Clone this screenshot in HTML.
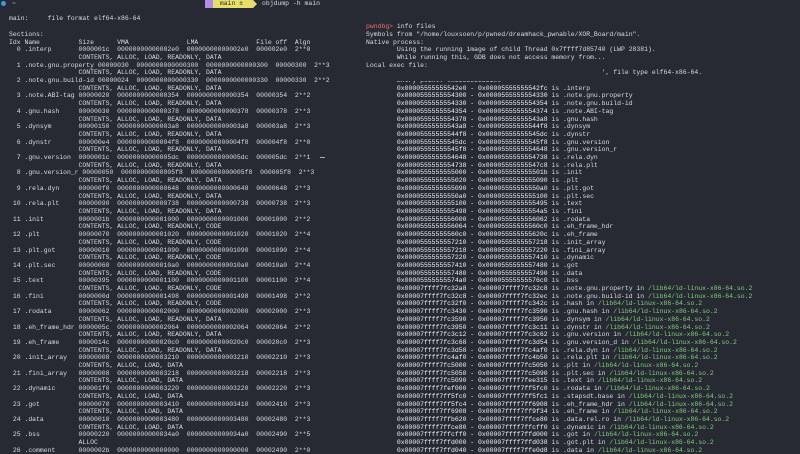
<!DOCTYPE html>
<html><head><meta charset="utf-8"><style>
html,body{margin:0;padding:0;background:#272a33;width:800px;height:449px;overflow:hidden}
pre{position:absolute;margin:0;font-family:"Liberation Mono",monospace;font-size:6.45px;line-height:7.7px;color:#d6dbe4;white-space:pre}
.r{color:#ef6b73}.g{color:#7fd07a}.w{color:#eef1f6}
</style></head><body>
<div style="position:absolute;left:1px;top:1px;width:5px;height:5px;border-radius:50%;background:#3a9fd8"></div>
<div style="position:absolute;left:205px;top:0;width:8px;height:8px;background:#b48ae8"></div>
<div style="position:absolute;left:213px;top:0;width:40px;height:8px;background:#e6df6b"></div>
<div style="position:absolute;left:253px;top:0;width:0;height:0;border-top:4px solid transparent;border-bottom:4px solid transparent;border-left:4px solid #e6df6b"></div>
<pre style="left:12px;top:0">~</pre>
<pre style="left:216px;top:0;color:#2a2a2a"> main ±</pre>
<pre style="left:262px;top:0">objdump -h main</pre>
<pre style="left:9px;top:0">


main:     file format elf64-x86-64

Sections:
Idx Name          Size      VMA               LMA               File off  Algn
  0 .interp       0000001c  00000000000002e0  00000000000002e0  000002e0  2**0
                  CONTENTS, ALLOC, LOAD, READONLY, DATA
  1 .note.gnu.property 00000030  0000000000000300  0000000000000300  00000300  2**3
                  CONTENTS, ALLOC, LOAD, READONLY, DATA
  2 .note.gnu.build-id 00000024  0000000000000330  0000000000000330  00000330  2**2
                  CONTENTS, ALLOC, LOAD, READONLY, DATA
  3 .note.ABI-tag 00000020  0000000000000354  0000000000000354  00000354  2**2
                  CONTENTS, ALLOC, LOAD, READONLY, DATA
  4 .gnu.hash     00000030  0000000000000378  0000000000000378  00000378  2**3
                  CONTENTS, ALLOC, LOAD, READONLY, DATA
  5 .dynsym       00000150  00000000000003a8  00000000000003a8  000003a8  2**3
                  CONTENTS, ALLOC, LOAD, READONLY, DATA
  6 .dynstr       000000e4  00000000000004f8  00000000000004f8  000004f8  2**0
                  CONTENTS, ALLOC, LOAD, READONLY, DATA
  7 .gnu.version  0000001c  00000000000005dc  00000000000005dc  000005dc  2**1
                  CONTENTS, ALLOC, LOAD, READONLY, DATA
  8 .gnu.version_r 00000050  00000000000005f8  00000000000005f8  000005f8  2**3
                  CONTENTS, ALLOC, LOAD, READONLY, DATA
  9 .rela.dyn     000000f0  0000000000000648  0000000000000648  00000648  2**3
                  CONTENTS, ALLOC, LOAD, READONLY, DATA
 10 .rela.plt     00000090  0000000000000738  0000000000000738  00000738  2**3
                  CONTENTS, ALLOC, LOAD, READONLY, DATA
 11 .init         0000001b  0000000000001000  0000000000001000  00001000  2**2
                  CONTENTS, ALLOC, LOAD, READONLY, CODE
 12 .plt          00000070  0000000000001020  0000000000001020  00001020  2**4
                  CONTENTS, ALLOC, LOAD, READONLY, CODE
 13 .plt.got      00000010  0000000000001090  0000000000001090  00001090  2**4
                  CONTENTS, ALLOC, LOAD, READONLY, CODE
 14 .plt.sec      00000060  00000000000010a0  00000000000010a0  000010a0  2**4
                  CONTENTS, ALLOC, LOAD, READONLY, CODE
 15 .text         00000395  0000000000001100  0000000000001100  00001100  2**4
                  CONTENTS, ALLOC, LOAD, READONLY, CODE
 16 .fini         0000000d  0000000000001498  0000000000001498  00001498  2**2
                  CONTENTS, ALLOC, LOAD, READONLY, CODE
 17 .rodata       00000062  0000000000002000  0000000000002000  00002000  2**3
                  CONTENTS, ALLOC, LOAD, READONLY, DATA
 18 .eh_frame_hdr 0000005c  0000000000002064  0000000000002064  00002064  2**2
                  CONTENTS, ALLOC, LOAD, READONLY, DATA
 19 .eh_frame     0000014c  00000000000020c0  00000000000020c0  000020c0  2**3
                  CONTENTS, ALLOC, LOAD, READONLY, DATA
 20 .init_array   00000008  0000000000003210  0000000000003210  00002210  2**3
                  CONTENTS, ALLOC, LOAD, DATA
 21 .fini_array   00000008  0000000000003218  0000000000003218  00002218  2**3
                  CONTENTS, ALLOC, LOAD, DATA
 22 .dynamic      000001f0  0000000000003220  0000000000003220  00002220  2**3
                  CONTENTS, ALLOC, LOAD, DATA
 23 .got          00000070  0000000000003410  0000000000003410  00002410  2**3
                  CONTENTS, ALLOC, LOAD, DATA
 24 .data         00000010  0000000000003480  0000000000003480  00002480  2**3
                  CONTENTS, ALLOC, LOAD, DATA
 25 .bss          00000220  00000000000034a0  00000000000034a0  00002490  2**5
                  ALLOC
 26 .comment      0000002b  0000000000000000  0000000000000000  00002490  2**0</pre>
<pre style="left:366px;top:0">



<span class="r">pwndbg&gt;</span> info files
Symbols from "/home/louxsoen/p/pwned/dreamhack_pwnable/XOR_Board/main".
Native process:
        Using the running image of child Thread 0x7ffff7d85740 (LWP 28381).
        While running this, GDB does not access memory from...
Local exec file:
                                                             ', file type elf64-x86-64.
        Entry point: 0x555555555100
<span class="w">        0x00005555555542e0 - 0x00005555555542fc</span> is .interp
<span class="w">        0x0000555555554300 - 0x0000555555554330</span> is .note.gnu.property
<span class="w">        0x0000555555554330 - 0x0000555555554354</span> is .note.gnu.build-id
<span class="w">        0x0000555555554354 - 0x0000555555554374</span> is .note.ABI-tag
<span class="w">        0x0000555555554378 - 0x00005555555543a8</span> is .gnu.hash
<span class="w">        0x00005555555543a8 - 0x00005555555544f8</span> is .dynsym
<span class="w">        0x00005555555544f8 - 0x00005555555545dc</span> is .dynstr
<span class="w">        0x00005555555545dc - 0x00005555555545f8</span> is .gnu.version
<span class="w">        0x00005555555545f8 - 0x0000555555554648</span> is .gnu.version_r
<span class="w">        0x0000555555554648 - 0x0000555555554738</span> is .rela.dyn
<span class="w">        0x0000555555554738 - 0x00005555555547c8</span> is .rela.plt
<span class="w">        0x0000555555555000 - 0x000055555555501b</span> is .init
<span class="w">        0x0000555555555020 - 0x0000555555555090</span> is .plt
<span class="w">        0x0000555555555090 - 0x00005555555550a0</span> is .plt.got
<span class="w">        0x00005555555550a0 - 0x0000555555555100</span> is .plt.sec
<span class="w">        0x0000555555555100 - 0x0000555555555495</span> is .text
<span class="w">        0x0000555555555498 - 0x00005555555554a5</span> is .fini
<span class="w">        0x0000555555556000 - 0x0000555555556062</span> is .rodata
<span class="w">        0x0000555555556064 - 0x00005555555560c0</span> is .eh_frame_hdr
<span class="w">        0x00005555555560c0 - 0x000055555555620c</span> is .eh_frame
<span class="w">        0x0000555555557210 - 0x0000555555557218</span> is .init_array
<span class="w">        0x0000555555557218 - 0x0000555555557220</span> is .fini_array
<span class="w">        0x0000555555557220 - 0x0000555555557410</span> is .dynamic
<span class="w">        0x0000555555557410 - 0x0000555555557480</span> is .got
<span class="w">        0x0000555555557480 - 0x0000555555557490</span> is .data
<span class="w">        0x00005555555574a0 - 0x00005555555576c0</span> is .bss
<span class="w">        0x00007ffff7fc32a8 - 0x00007ffff7fc32c8</span> is .note.gnu.property in <span class="g">/lib64/ld-linux-x86-64.so.2</span>
<span class="w">        0x00007ffff7fc32c8 - 0x00007ffff7fc32ec</span> is .note.gnu.build-id in <span class="g">/lib64/ld-linux-x86-64.so.2</span>
<span class="w">        0x00007ffff7fc32f0 - 0x00007ffff7fc342c</span> is .hash in <span class="g">/lib64/ld-linux-x86-64.so.2</span>
<span class="w">        0x00007ffff7fc3430 - 0x00007ffff7fc3590</span> is .gnu.hash in <span class="g">/lib64/ld-linux-x86-64.so.2</span>
<span class="w">        0x00007ffff7fc3590 - 0x00007ffff7fc3950</span> is .dynsym in <span class="g">/lib64/ld-linux-x86-64.so.2</span>
<span class="w">        0x00007ffff7fc3950 - 0x00007ffff7fc3c11</span> is .dynstr in <span class="g">/lib64/ld-linux-x86-64.so.2</span>
<span class="w">        0x00007ffff7fc3c12 - 0x00007ffff7fc3c62</span> is .gnu.version in <span class="g">/lib64/ld-linux-x86-64.so.2</span>
<span class="w">        0x00007ffff7fc3c68 - 0x00007ffff7fc3d54</span> is .gnu.version_d in <span class="g">/lib64/ld-linux-x86-64.so.2</span>
<span class="w">        0x00007ffff7fc3d58 - 0x00007ffff7fc4af0</span> is .rela.dyn in <span class="g">/lib64/ld-linux-x86-64.so.2</span>
<span class="w">        0x00007ffff7fc4af0 - 0x00007ffff7fc4b50</span> is .rela.plt in <span class="g">/lib64/ld-linux-x86-64.so.2</span>
<span class="w">        0x00007ffff7fc5000 - 0x00007ffff7fc5050</span> is .plt in <span class="g">/lib64/ld-linux-x86-64.so.2</span>
<span class="w">        0x00007ffff7fc5050 - 0x00007ffff7fc5090</span> is .plt.sec in <span class="g">/lib64/ld-linux-x86-64.so.2</span>
<span class="w">        0x00007ffff7fc5090 - 0x00007ffff7fee315</span> is .text in <span class="g">/lib64/ld-linux-x86-64.so.2</span>
<span class="w">        0x00007ffff7fef000 - 0x00007ffff7ff5fc0</span> is .rodata in <span class="g">/lib64/ld-linux-x86-64.so.2</span>
<span class="w">        0x00007ffff7ff5fc0 - 0x00007ffff7ff5fc1</span> is .stapsdt.base in <span class="g">/lib64/ld-linux-x86-64.so.2</span>
<span class="w">        0x00007ffff7ff5fc4 - 0x00007ffff7ff6908</span> is .eh_frame_hdr in <span class="g">/lib64/ld-linux-x86-64.so.2</span>
<span class="w">        0x00007ffff7ff6908 - 0x00007ffff7ff9f34</span> is .eh_frame in <span class="g">/lib64/ld-linux-x86-64.so.2</span>
<span class="w">        0x00007ffff7ffb620 - 0x00007ffff7ffce80</span> is .data.rel.ro in <span class="g">/lib64/ld-linux-x86-64.so.2</span>
<span class="w">        0x00007ffff7ffce80 - 0x00007ffff7ffcff0</span> is .dynamic in <span class="g">/lib64/ld-linux-x86-64.so.2</span>
<span class="w">        0x00007ffff7ffcff0 - 0x00007ffff7ffd000</span> is .got in <span class="g">/lib64/ld-linux-x86-64.so.2</span>
<span class="w">        0x00007ffff7ffd000 - 0x00007ffff7ffd038</span> is .got.plt in <span class="g">/lib64/ld-linux-x86-64.so.2</span>
<span class="w">        0x00007ffff7ffd040 - 0x00007ffff7ffe0d8</span> is .data in <span class="g">/lib64/ld-linux-x86-64.so.2</span></pre>
<div style="position:absolute;left:366px;top:77px;width:200px;height:4px;background:#272a33"></div>
<div style="position:absolute;left:320px;top:157px;width:5px;height:1px;background:#aab"></div>
</body></html>
